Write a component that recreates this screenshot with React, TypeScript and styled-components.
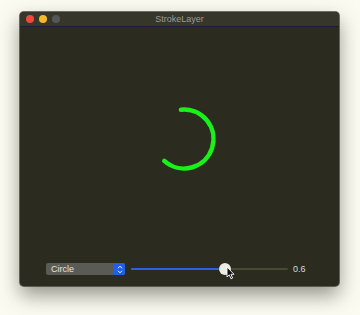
import React from "react";
import styled, { createGlobalStyle } from "styled-components";

const Global = createGlobalStyle`
  html, body {
    margin: 0;
    padding: 0;
    background: #fbfbf2;
    font-family: "Liberation Sans", Arial, sans-serif;
  }
`;

const Page = styled.div`
  width: 360px;
  height: 315px;
  padding: 12px 0 0 20px;
  box-sizing: border-box;
`;

const Window = styled.div`
  width: 319px;
  height: 274px;
  display: flex;
  flex-direction: column;
  background: #2b2b1f;
  border-radius: 4px;
  overflow: hidden;
  box-shadow: 0 9px 20px rgba(60, 60, 50, 0.55), 0 0 0 1px rgba(20, 20, 20, 0.6);
`;

const TitleBar = styled.div`
  height: 14px;
  flex: none;
  display: flex;
  align-items: center;
  position: relative;
  background: #36362a;
  border-bottom: 1px solid #1d1d3a;
  padding-left: 6px;
  gap: 5px;
`;

const Light = styled.span<{ $color: string }>`
  width: 8px;
  height: 8px;
  border-radius: 50%;
  background: ${(p) => p.$color};
`;

const Title = styled.div`
  position: absolute;
  left: 0;
  right: 0;
  text-align: center;
  font-size: 9px;
  color: #9c9c98;
  pointer-events: none;
`;

const Canvas = styled.div`
  flex: 1;
  display: flex;
  align-items: center;
  justify-content: center;
`;

const ArcBox = styled.svg`
  width: 70px;
  height: 70px;
  margin: 0 0 12px 9px;
`;

const Controls = styled.div`
  height: 14px;
  flex: none;
  display: flex;
  align-items: center;
  gap: 6px;
  padding: 0 0 10px 26px;
`;

const Popup = styled.div`
  width: 79px;
  height: 12px;
  display: flex;
  align-items: center;
  background: #5b5b55;
  border-radius: 2px;
  overflow: hidden;
`;

const PopupText = styled.span`
  flex: 1;
  padding-left: 5px;
  font-size: 9px;
  color: #e4e4e0;
`;

const Stepper = styled.span`
  width: 11px;
  height: 12px;
  display: flex;
  align-items: center;
  justify-content: center;
  background: #2060e8;
`;

const Slider = styled.div`
  flex: 1;
  height: 12px;
  position: relative;
  display: flex;
  align-items: center;
  margin-right: -1px;
`;

const Track = styled.div`
  width: 100%;
  height: 2px;
  border-radius: 1px;
  background: #4a4a30;
  overflow: hidden;
`;

const Fill = styled.div`
  height: 100%;
  background: #2a62e0;
`;

const Knob = styled.div`
  position: absolute;
  top: 0;
  width: 12px;
  height: 12px;
  margin-left: -6px;
  border-radius: 50%;
  background: #ecece4;
  box-shadow: 0 0 1px rgba(0, 0, 0, 0.6);
`;

const Pointer = styled.svg`
  position: absolute;
  top: 3px;
  width: 9px;
  height: 14px;
`;

const Value = styled.span`
  width: 46px;
  font-size: 9px;
  color: #dcdcd6;
`;

const value = 0.6;

function polar(cx: number, cy: number, r: number, deg: number) {
  const a = (deg * Math.PI) / 180;
  return [cx + r * Math.cos(a), cy + r * Math.sin(a)];
}

export default function App() {
  const [sx, sy] = polar(35, 35, 29.5, -96);
  const [ex, ey] = polar(35, 35, 29.5, 132);
  return (
    <>
      <Global />
      <Page>
        <Window>
          <TitleBar>
            <Light $color="#f0483e" />
            <Light $color="#f5b82b" />
            <Light $color="#56565a" />
            <Title>StrokeLayer</Title>
          </TitleBar>
          <Canvas>
            <ArcBox viewBox="0 0 70 70">
              <path
                d={`M ${sx} ${sy} A 29.5 29.5 0 1 1 ${ex} ${ey}`}
                fill="none"
                stroke="#19f219"
                strokeWidth="4.5"
                strokeLinecap="round"
              />
            </ArcBox>
          </Canvas>
          <Controls>
            <Popup>
              <PopupText>Circle</PopupText>
              <Stepper>
                <svg width="6" height="9" viewBox="0 0 6 9">
                  <path
                    d="M1 3.2 L3 1.2 L5 3.2 M1 5.8 L3 7.8 L5 5.8"
                    fill="none"
                    stroke="#fff"
                    strokeWidth="1"
                  />
                </svg>
              </Stepper>
            </Popup>
            <Slider>
              <Track>
                <Fill style={{ width: `${value * 100}%` }} />
              </Track>
              <Knob style={{ left: `${value * 100}%` }} />
              <Pointer
                viewBox="0 0 9 14"
                style={{ left: `calc(${value * 100}% + 1px)` }}
              >
                <path
                  d="M1 1 L1 11 L3.3 8.8 L5 12.8 L6.6 12.1 L5 8.3 L8 8.3 Z"
                  fill="#111"
                  stroke="#fff"
                  strokeWidth="0.9"
                  strokeLinejoin="round"
                />
              </Pointer>
            </Slider>
            <Value>{value}</Value>
          </Controls>
        </Window>
      </Page>
    </>
  );
}
